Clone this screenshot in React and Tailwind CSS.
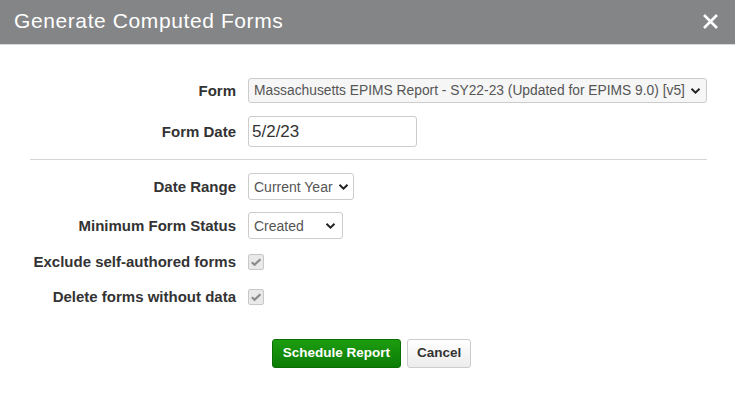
import React from "react";

const Chevron = () => (
  <svg width="11" height="8" viewBox="0 0 11 8" className="shrink-0">
    <path d="M1.5 1.8 L5.5 5.6 L9.5 1.8" fill="none" stroke="#222" strokeWidth="2" />
  </svg>
);

const Check = () => (
  <div className="w-[16px] h-[16px] rounded-[2px] bg-[#e9e9e9] border border-[#c8c8c8] flex items-center justify-center">
    <svg width="12" height="10" viewBox="0 0 12 10">
      <path d="M1.8 5.2 L4.6 7.8 L10.4 2.2" fill="none" stroke="#8a8a8a" strokeWidth="2.2" />
    </svg>
  </div>
);

function Row({ label, h, mt, children }) {
  return (
    <div className={`flex items-center gap-[12px] ${mt} ${h}`}>
      <div className="w-[208px] shrink-0 text-right text-[15px] font-bold text-[#333] pt-[1px]">{label}</div>
      {children}
    </div>
  );
}

export default function App() {
  return (
    <div className="w-[735px] h-[406px] bg-white" style={{ fontFamily: '"Liberation Sans", Arial, sans-serif' }}>
      <div className="h-[45px] bg-[#848586] border-b border-[#d9d9d9] flex items-center justify-between pl-[14px] pr-[16px]">
        <span className="text-white text-[21px] tracking-[0.6px] leading-none -mt-[3px]">Generate Computed Forms</span>
        <svg width="17" height="17" viewBox="0 0 17 17" className="-mt-[1px]">
          <path d="M2 2 L15 15 M15 2 L2 15" stroke="white" strokeWidth="2.6" />
        </svg>
      </div>
      <div className="px-[28px] pt-[33px]">
        <Row label="Form" h="h-[25px]" mt="">
          <div className="h-[25px] w-[459px] border border-[#ccc] rounded-[3px] bg-[#f6f6f6] flex items-center justify-between pl-[5px] pr-[5px] pt-[1px] text-[13.8px] text-[#555]">
            <span>Massachusetts EPIMS Report - SY22-23 (Updated for EPIMS 9.0) [v5]</span>
            <Chevron />
          </div>
        </Row>
        <Row label="Form Date" h="h-[31px]" mt="mt-[13px]">
          <div className="h-[31px] w-[169px] border border-[#ccc] rounded-[3px] flex items-center pl-[3px] pt-[1px] text-[17px] text-[#333]">
            5/2/23
          </div>
        </Row>
        <div className="h-px bg-[#d5d5d5] mt-[12px] ml-[2px]" />
        <Row label="Date Range" h="h-[27px]" mt="mt-[13px]">
          <div className="h-[27px] w-[106px] border border-[#ccc] rounded-[3px] bg-white flex items-center justify-between pl-[5px] pr-[4px] pt-[1px] text-[14px] text-[#555]">
            <span>Current Year</span>
            <Chevron />
          </div>
        </Row>
        <Row label="Minimum Form Status" h="h-[27px]" mt="mt-[12px]">
          <div className="h-[27px] w-[95px] border border-[#ccc] rounded-[3px] bg-white flex items-center justify-between pl-[5px] pr-[6px] pt-[1px] text-[14px] text-[#555]">
            <span>Created</span>
            <Chevron />
          </div>
        </Row>
        <Row label="Exclude self-authored forms" h="h-[16px]" mt="mt-[15px]">
          <Check />
        </Row>
        <Row label="Delete forms without data" h="h-[16px]" mt="mt-[19px]">
          <Check />
        </Row>
        <div className="flex justify-center gap-[6px] mt-[34px] pl-[8px]">
          <button className="h-[29px] px-[10px] rounded-[3px] border border-[#0a6e04] bg-gradient-to-b from-[#1d9d10] to-[#0b7c05] text-white text-[13.5px] font-bold">
            Schedule Report
          </button>
          <button className="h-[29px] px-[9px] rounded-[3px] border border-[#ccc] bg-gradient-to-b from-white to-[#ececec] text-[#333] text-[13.5px] font-bold">
            Cancel
          </button>
        </div>
      </div>
    </div>
  );
}
